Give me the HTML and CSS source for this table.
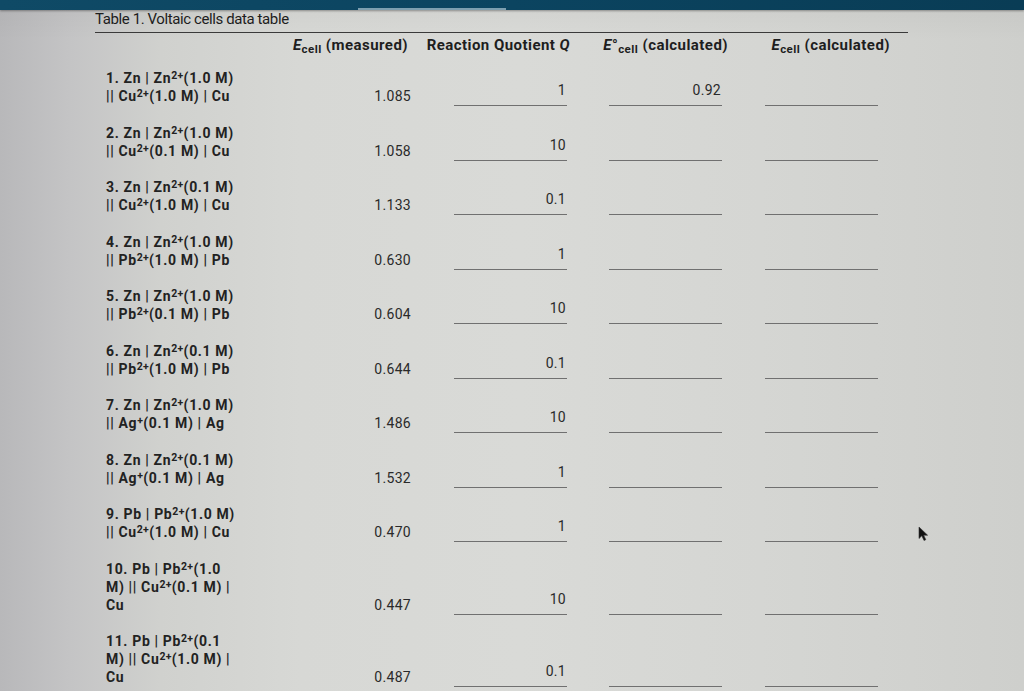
FILE: index.html
```html
<!DOCTYPE html>
<html lang="en">
<head>
<meta charset="utf-8">
<title>Table 1. Voltaic cells data table</title>
<link rel="stylesheet" href="styles.css">
</head>
<body>
<div class="topbar"><div class="topbar-glint"></div></div>
<main class="sheet">
  <div class="caption">Table 1. Voltaic cells data table</div>
  <div class="table">
    <div class="row head">
      <div class="hcell h-meas"><i>E</i><sub>cell</sub> (measured)</div>
      <div class="hcell h-q">Reaction Quotient <i>Q</i></div>
      <div class="hcell h-e0"><i>E</i>°<sub>cell</sub> (calculated)</div>
      <div class="hcell h-e"><i>E</i><sub>cell</sub> (calculated)</div>
    </div>

    <div class="row">
      <div class="label">1. Zn | Zn<sup>2+</sup>(1.0 M)<br>|| Cu<sup>2+</sup>(1.0 M) | Cu</div>
      <div class="value">1.085</div>
      <div class="blank b-q">1</div>
      <div class="blank b-e0">0.92</div>
      <div class="blank b-e"></div>
    </div>
    <div class="row">
      <div class="label">2. Zn | Zn<sup>2+</sup>(1.0 M)<br>|| Cu<sup>2+</sup>(0.1 M) | Cu</div>
      <div class="value">1.058</div>
      <div class="blank b-q">10</div>
      <div class="blank b-e0"></div>
      <div class="blank b-e"></div>
    </div>
    <div class="row">
      <div class="label">3. Zn | Zn<sup>2+</sup>(0.1 M)<br>|| Cu<sup>2+</sup>(1.0 M) | Cu</div>
      <div class="value">1.133</div>
      <div class="blank b-q">0.1</div>
      <div class="blank b-e0"></div>
      <div class="blank b-e"></div>
    </div>
    <div class="row">
      <div class="label">4. Zn | Zn<sup>2+</sup>(1.0 M)<br>|| Pb<sup>2+</sup>(1.0 M) | Pb</div>
      <div class="value">0.630</div>
      <div class="blank b-q">1</div>
      <div class="blank b-e0"></div>
      <div class="blank b-e"></div>
    </div>
    <div class="row">
      <div class="label">5. Zn | Zn<sup>2+</sup>(1.0 M)<br>|| Pb<sup>2+</sup>(0.1 M) | Pb</div>
      <div class="value">0.604</div>
      <div class="blank b-q">10</div>
      <div class="blank b-e0"></div>
      <div class="blank b-e"></div>
    </div>
    <div class="row">
      <div class="label">6. Zn | Zn<sup>2+</sup>(0.1 M)<br>|| Pb<sup>2+</sup>(1.0 M) | Pb</div>
      <div class="value">0.644</div>
      <div class="blank b-q">0.1</div>
      <div class="blank b-e0"></div>
      <div class="blank b-e"></div>
    </div>
    <div class="row">
      <div class="label">7. Zn | Zn<sup>2+</sup>(1.0 M)<br>|| Ag<sup>+</sup>(0.1 M) | Ag</div>
      <div class="value">1.486</div>
      <div class="blank b-q">10</div>
      <div class="blank b-e0"></div>
      <div class="blank b-e"></div>
    </div>
    <div class="row">
      <div class="label">8. Zn | Zn<sup>2+</sup>(0.1 M)<br>|| Ag<sup>+</sup>(0.1 M) | Ag</div>
      <div class="value">1.532</div>
      <div class="blank b-q">1</div>
      <div class="blank b-e0"></div>
      <div class="blank b-e"></div>
    </div>
    <div class="row">
      <div class="label">9. Pb | Pb<sup>2+</sup>(1.0 M)<br>|| Cu<sup>2+</sup>(1.0 M) | Cu</div>
      <div class="value">0.470</div>
      <div class="blank b-q">1</div>
      <div class="blank b-e0"></div>
      <div class="blank b-e"></div>
    </div>
    <div class="row">
      <div class="label">10. Pb | Pb<sup>2+</sup>(1.0<br>M) || Cu<sup>2+</sup>(0.1 M) |<br>Cu</div>
      <div class="value">0.447</div>
      <div class="blank b-q">10</div>
      <div class="blank b-e0"></div>
      <div class="blank b-e"></div>
    </div>
    <div class="row">
      <div class="label">11. Pb | Pb<sup>2+</sup>(0.1<br>M) || Cu<sup>2+</sup>(1.0 M) |<br>Cu</div>
      <div class="value">0.487</div>
      <div class="blank b-q">0.1</div>
      <div class="blank b-e0"></div>
      <div class="blank b-e"></div>
    </div>
  </div>
</main>
<svg class="cursor" width="12" height="16" viewBox="0 0 12 16" aria-hidden="true">
  <path d="M1 1 L1 12.5 L3.8 9.8 L6 14.5 L7.8 13.7 L5.7 9.2 L9.6 9.2 Z" fill="#111" stroke="#333" stroke-width="0.6" stroke-linejoin="round"/>
</svg>
</body>
</html>
```
FILE: styles.css
```css
html, body {
  margin: 0;
  padding: 0;
}

body {
  width: 1024px;
  height: 691px;
  overflow: hidden;
  position: relative;
  font-family: Roboto, "Liberation Sans", sans-serif;
  color: #222;
  background:
    linear-gradient(180deg, rgba(0,0,0,0.04) 0px, rgba(0,0,0,0) 40px),
    linear-gradient(90deg, #b8b8ba 0px, #c4c4c5 70px, #d0d1ce 160px, #d7d8d5 300px, #d9dad7 520px, #d5d6d3 760px, #cecfcc 1024px);
}

.topbar {
  height: 10px;
  display: flex;
  align-items: flex-end;
  padding-left: 358px;
  background: linear-gradient(90deg, #0f4a66 0%, #0b4460 50%, #093c55 100%);
  box-shadow: 0 1px 2px rgba(0,0,0,0.35);
}

.topbar-glint {
  width: 148px;
  height: 2px;
  background: #7d9fb0;
}

.sheet {
  margin-left: 95px;
  width: 813px;
}

.caption {
  font-size: 15px;
  line-height: 17px;
  letter-spacing: -0.4px;
  color: #1d1d1d;
  padding: 1px 0 4px;
  border-bottom: 1px solid #3a3a3a;
}

.row {
  display: grid;
  grid-template-columns: 190px 126px 156px 155px 156px;
  align-items: end;
  padding-top: 18.5px;
}

.row.head {
  padding-top: 4px;
  margin-bottom: -2.5px;
}

.hcell {
  font-weight: 700;
  font-size: 15px;
  line-height: 16px;
  letter-spacing: 0.45px;
  color: #1e1e1e;
  text-align: right;
  white-space: nowrap;
}

.hcell i {
  font-style: italic;
}

.hcell sub {
  font-size: 11.5px;
  vertical-align: -3px;
  line-height: 0;
}

.h-meas {
  grid-column: 2;
  padding-right: 3px;
}

.h-q {
  margin-right: -3px;
}

.h-e0 {
  margin-right: -6px;
}

.h-e {
  margin-right: -12px;
}

.label {
  padding-left: 11px;
  font-weight: 700;
  font-size: 14px;
  line-height: 18px;
  letter-spacing: 0.65px;
  color: #222;
  white-space: nowrap;
}

.label sup {
  font-size: 10.5px;
  line-height: 0;
  vertical-align: 4px;
  letter-spacing: 0.3px;
}

.value {
  font-size: 14px;
  line-height: 18px;
  letter-spacing: 0.3px;
  text-align: right;
  color: #2a2a2a;
}

.blank {
  justify-self: end;
  width: 113px;
  box-sizing: border-box;
  font-size: 14px;
  line-height: 16px;
  letter-spacing: 0.3px;
  padding: 0 1px 7px 0;
  text-align: right;
  color: #2a2a2a;
  border-bottom: 1px solid #707070;
  margin-bottom: -1px;
}

.cursor {
  position: absolute;
  left: 918px;
  top: 526px;
}
```
